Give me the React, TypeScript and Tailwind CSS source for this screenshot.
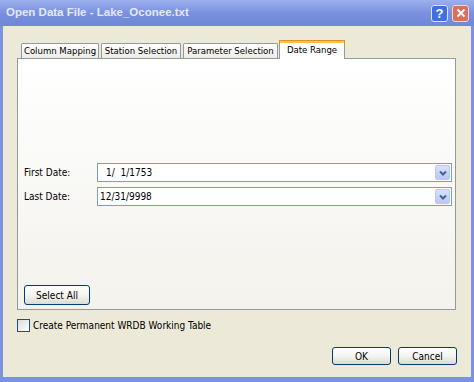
// Open Data File dialog — XP-style, Date Range tab selected.
import React from "react";

const font = { fontFamily: '"DejaVu Sans Condensed", "DejaVu Sans", sans-serif', fontStretch: "condensed" as const };

function Tab({ label, w, active }: { label: string; w: string; active?: boolean }) {
  if (active) {
    return (
      <div className={`relative z-10 -mb-px -ml-px flex h-[19px] ${w} items-start justify-center border-x border-[#919b9c] bg-white`}>
        <div className="absolute -left-px -right-px top-0 h-[3px] rounded-t-[2px] bg-[#e68b2c]" />
        <div className="absolute left-0 right-0 top-[1px] h-[2px] bg-[#ffc73c]" />
        <span className="mt-[4px] text-[9.5px] leading-[12px]">{label}</span>
      </div>
    );
  }
  return (
    <div className={`flex h-[15px] ${w} items-center justify-center rounded-t-[2px] border-x border-t border-[#919b9c] bg-gradient-to-b from-white to-[#ecebe6]`}>
      <span className="text-[9.5px] leading-[12px]">{label}</span>
    </div>
  );
}

function Combo({ value, indent }: { value: string; indent?: boolean }) {
  return (
    <div className="flex h-[19px] w-[355px] items-center border border-[#7f9db9] bg-white">
      <span className={indent ? "flex-1 whitespace-pre pl-[8px]" : "flex-1 whitespace-pre pl-[2px]"}>{value}</span>
      <div className="mr-px flex h-[15px] w-[15px] items-center justify-center rounded-[2px] border border-[#b7c9f5] bg-gradient-to-b from-[#d7e3fd] to-[#b5c8f8]">
        <svg width="8" height="6" viewBox="0 0 8 6">
          <path d="M1 1.5 L4 4.5 L7 1.5" fill="none" stroke="#4d6185" strokeWidth="2" />
        </svg>
      </div>
    </div>
  );
}

function XpButton({ label, w, h }: { label: string; w: string; h: string }) {
  return (
    <div
      className={`flex ${w} ${h} items-center justify-center rounded-[3px] border border-[#003c74] bg-gradient-to-b from-white via-[#f4f4f0] to-[#dcdbd3]`}
    >
      {label}
    </div>
  );
}

export default function App() {
  return (
    <div className="flex h-[382px] w-[474px] flex-col bg-[#7b92e0] text-[10px] text-black" style={font}>
      {/* Barre de titre */}
      <div className="flex h-[26px] items-center bg-gradient-to-b from-[#9db1ef] via-[#7a90de] to-[#6f87da] pl-[6px] pr-[5px]">
        <span
          className="flex-1 text-[11.5px] font-bold text-[#e2e9fd]"
          style={{ fontFamily: '"Liberation Sans", Arial, sans-serif', fontStretch: "normal" }}
        >
          Open Data File - Lake_Oconee.txt
        </span>
        <div className="flex gap-[4px]">
          <div
            className="flex h-[17px] w-[17px] items-center justify-center rounded-[3px] border border-[#dbe4fb] bg-[#3f6fe0] text-[13px] font-bold leading-none text-white"
            style={{ fontFamily: '"Liberation Sans", Arial, sans-serif' }}
          >
            ?
          </div>
          <div className="flex h-[17px] w-[17px] items-center justify-center rounded-[3px] border border-[#f0d8d0] bg-[#d8705c]">
            <svg width="10" height="10" viewBox="0 0 10 10">
              <path d="M1.5 1.5 L8.5 8.5 M8.5 1.5 L1.5 8.5" stroke="white" strokeWidth="2" />
            </svg>
          </div>
        </div>
      </div>

      {/* Zone client */}
      <div className="mx-[3px] mb-[5px] flex flex-1 flex-col bg-[#ece9d8] pl-[14px] pr-[14px]">
        {/* Onglets */}
        <div className="mt-[14px] flex h-[18px] items-end gap-[2px] pl-[4px]">
          <Tab label="Column Mapping" w="w-[78px]" />
          <Tab label="Station Selection" w="w-[80px]" />
          <Tab label="Parameter Selection" w="w-[95px]" />
          <Tab label="Date Range" w="w-[66px]" active />
        </div>

        {/* Panneau Date Range */}
        <div className="flex h-[252px] w-[439px] flex-col border border-[#919b9c] bg-gradient-to-b from-white to-[#f3f2ec] pl-[6px]">
          <div className="mt-[104px] flex items-center">
            <span className="w-[73px]">First Date:</span>
            <Combo value="1/  1/1753" indent />
          </div>
          <div className="mt-[5px] flex items-center">
            <span className="w-[73px]">Last Date:</span>
            <Combo value="12/31/9998" />
          </div>
          <div className="mt-auto mb-[4px]">
            <XpButton label="Select All" w="w-[66px]" h="h-[20px]" />
          </div>
        </div>

        {/* Case à cocher */}
        <div className="mt-[8px] flex items-center gap-[3px]">
          <div className="h-[13px] w-[13px] border border-[#1c5180] bg-gradient-to-br from-[#dcdcd7] to-white" />
          <span>Create Permanent WRDB Working Table</span>
        </div>

        {/* Boutons */}
        <div className="mt-[14px] flex justify-end gap-[7px]">
          <XpButton label="OK" w="w-[59px]" h="h-[18px]" />
          <XpButton label="Cancel" w="w-[59px]" h="h-[18px]" />
        </div>
      </div>
    </div>
  );
}
